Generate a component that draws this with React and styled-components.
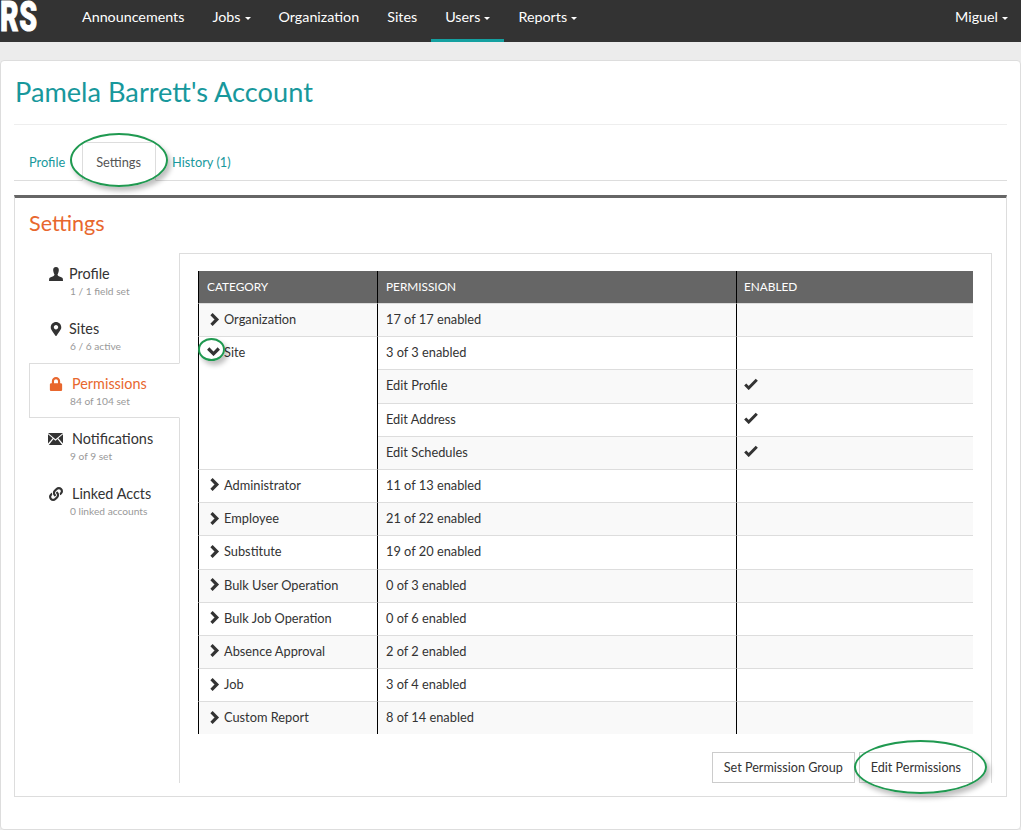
import React from 'react'
import styled, {createGlobalStyle} from 'styled-components'
import {FaLink, FaLock, FaMapMarkerAlt} from 'react-icons/fa'

const GlobalStyle = createGlobalStyle`
    html, body {
        margin: 0;
        background: #ececec;
        overflow: hidden;
    }
    body {
        font-family: Lato, "Open Sans", Arial, sans-serif;
        font-size: 12.8px;
        line-height: 20px;
        color: #333;
    }
`

const navItems = [
    {label: 'Announcements'},
    {label: 'Jobs', caret: true},
    {label: 'Organization'},
    {label: 'Sites'},
    {label: 'Users', caret: true, active: true},
    {label: 'Reports', caret: true},
]

const sideItems = [
    {label: 'Profile', sub: '1 / 1 field set', icon: <UserIcon/>},
    {label: 'Sites', sub: '6 / 6 active', icon: <FaMapMarkerAlt size={14}/>},
    {label: 'Permissions', sub: '84 of 104 set', icon: <FaLock size={14}/>, wide: true, active: true},
    {label: 'Notifications', sub: '9 of 9 set', icon: <MailIcon/>, wide: true},
    {label: 'Linked Accts', sub: '0 linked accounts', icon: <FaLink size={14}/>, wide: true},
]

const categories = [
    {name: 'Organization', count: '17 of 17 enabled'},
    {
        name: 'Site',
        count: '3 of 3 enabled',
        open: true,
        items: ['Edit Profile', 'Edit Address', 'Edit Schedules'],
    },
    {name: 'Administrator', count: '11 of 13 enabled'},
    {name: 'Employee', count: '21 of 22 enabled'},
    {name: 'Substitute', count: '19 of 20 enabled'},
    {name: 'Bulk User Operation', count: '0 of 3 enabled'},
    {name: 'Bulk Job Operation', count: '0 of 6 enabled'},
    {name: 'Absence Approval', count: '2 of 2 enabled'},
    {name: 'Job', count: '3 of 4 enabled'},
    {name: 'Custom Report', count: '8 of 14 enabled'},
]

function UserIcon() {
    return (
        <svg width="14" height="14" viewBox="0 0 14 14" fill="#333">
            <path d="M7 0C4.9 0 4 1.5 4.2 3.4 4.4 5.2 5 6.6 5.4 7.3 5.6 8 5.2 8.7 4.2 9.2 2.6 10 .6 10.400.2 11.400L0 14h14l-.2-2.600c-.4-1-2.400-1.400-4-2.200-1-.5-1.400-1.200-1.200-1.900.4-.7 1-2.100 1.200-3.900C10 1.500 9.100 0 7 0z"/>
        </svg>
    )
}

function MailIcon() {
    return (
        <svg width="15" height="12" viewBox="0 0 15 12" fill="#333">
            <path d="M0 0h15L7.500 6.200z"/>
            <path d="M0 1.300v9.200l4.700-5.300z"/>
            <path d="M15 1.300v9.200l-4.700-5.300z"/>
            <path d="M.8 12h13.400L9.500 6.100 7.500 7.800 5.500 6.100z"/>
        </svg>
    )
}

function ChevronRightIcon() {
    return (
        <svg width="11" height="13" viewBox="0 0 11 13" fill="none" stroke="#333" strokeWidth="3.200">
            <path d="M2.500 1.200 7.800 6.500 2.500 11.800"/>
        </svg>
    )
}

function ChevronDownIcon() {
    return (
        <ChevronDownSvg width="13" height="9" viewBox="0 0 13 9" fill="none" stroke="#333" strokeWidth="3.200">
            <path d="M1.200 1.500 6.500 6.800 11.800 1.500"/>
        </ChevronDownSvg>
    )
}

function CheckIcon() {
    return (
        <svg width="14" height="12" viewBox="0 0 14 12" fill="none" stroke="#333" strokeWidth="3">
            <path d="M1.200 6.500 4.700 10 12.800 1.800"/>
        </svg>
    )
}

export default function App() {
    return (
        <>
            <GlobalStyle/>
            <NavBar>
                <Logo>RS</Logo>
                <NavList>
                    {navItems.map(item =>
                        <NavItem key={item.label} $active={item.active}>
                            {item.label}
                            {item.caret && <Caret/>}
                        </NavItem>
                    )}
                </NavList>
                <UserMenu>Miguel<Caret/></UserMenu>
            </NavBar>
            <Page>
                <Title>Pamela Barrett's Account</Title>
                <Tabs>
                    <Tab>Profile</Tab>
                    <Tab $active>
                        Settings
                        <SettingsRing/>
                    </Tab>
                    <Tab>History (1)</Tab>
                </Tabs>
                <SettingsPanel>
                    <PanelTitle>Settings</PanelTitle>
                    <PanelBody>
                        <SideNav>
                            {sideItems.map(item =>
                                <SideItem key={item.label} $active={item.active}>
                                    <SideHead $active={item.active}>
                                        <SideIcon $active={item.active} $wide={item.wide}>{item.icon}</SideIcon>
                                        {item.label}
                                    </SideHead>
                                    <SideSub>{item.sub}</SideSub>
                                </SideItem>
                            )}
                        </SideNav>
                        <Content>
                            <PermissionTable>
                                <colgroup>
                                    <col width="180"/>
                                    <col width="359"/>
                                    <col width="236"/>
                                </colgroup>
                                <thead>
                                <tr>
                                    <HeadCell>Category</HeadCell>
                                    <HeadCell>Permission</HeadCell>
                                    <HeadCell>Enabled</HeadCell>
                                </tr>
                                </thead>
                                <tbody>
                                {categories.flatMap((category, index) => {
                                    const striped = index === 0 || (index > 2 && index % 2 === 1)
                                    const rows = [
                                        <tr key={category.name}>
                                            <CategoryCell rowSpan={category.items ? category.items.length + 1 : 1} $striped={striped}>
                                                <CategoryName>
                                                    <Chevron>
                                                        {category.open ? <ChevronDownIcon/> : <ChevronRightIcon/>}
                                                        {category.open && <ChevronRing/>}
                                                    </Chevron>
                                                    {category.name}
                                                </CategoryName>
                                            </CategoryCell>
                                            <Cell $striped={striped}>{category.count}</Cell>
                                            <EnabledCell $striped={striped}/>
                                        </tr>
                                    ]
                                    ;(category.items || []).forEach((name, i) => {
                                        rows.push(
                                            <tr key={name}>
                                                <Cell $striped={i % 2 === 0}>{name}</Cell>
                                                <EnabledCell $striped={i % 2 === 0}><CheckIcon/></EnabledCell>
                                            </tr>
                                        )
                                    })
                                    return rows
                                })}
                                </tbody>
                            </PermissionTable>
                            <Actions>
                                <ActionButton>Set Permission Group</ActionButton>
                                <ActionButton>
                                    Edit Permissions
                                    <EditRing/>
                                </ActionButton>
                            </Actions>
                        </Content>
                    </PanelBody>
                </SettingsPanel>
            </Page>
        </>
    )
}

const NavBar = styled.header`
    height: 42px;
    background: #333;
    display: flex;
    align-items: stretch;
    color: #fff;
    overflow: hidden;
`

const Logo = styled.div`
    width: 68px;
    flex: none;
    font-family: "Roboto", Arial, sans-serif;
    font-weight: 900;
    font-size: 42px;
    line-height: 34px;
    letter-spacing: 1px;
    color: #fff;
    transform: scaleX(0.68);
    transform-origin: 0 0;
    -webkit-text-stroke: 1px #fff;
`

const NavList = styled.nav`
    display: flex;
    flex: 1;
`

const NavItem = styled.div`
    padding: 7px 14px 0;
    font-size: 14.3px;
    color: #fff;
    box-sizing: border-box;
    height: 42px;
    border-bottom: 3px solid ${props => props.$active ? '#14a0a0' : 'transparent'};
`

const UserMenu = styled.div`
    padding: 7px 13px 0 0;
    font-size: 14.3px;
    color: #fff;
`

const Caret = styled.span`
    display: inline-block;
    margin-left: 4px;
    vertical-align: middle;
    border-top: 3px solid #fff;
    border-left: 3px solid transparent;
    border-right: 3px solid transparent;
`

const Page = styled.main`
    box-sizing: border-box;
    height: 770px;
    margin-top: 18px;
    padding: 0 13px 0 13px;
    background: #fff;
    border: 1px solid #ddd;
    border-radius: 4px;
`

const Title = styled.h1`
    margin: 0;
    height: 64px;
    padding: 14px 0 0 1px;
    box-sizing: border-box;
    font-size: 27.2px;
    line-height: 34px;
    font-weight: 400;
    color: #18989c;
    border-bottom: 1px solid #eee;
`

const Tabs = styled.div`
    display: flex;
    margin-top: 17px;
    padding-left: 1px;
    height: 38px;
    border-bottom: 1px solid #ddd;
`

const Tab = styled.div`
    position: relative;
    box-sizing: border-box;
    height: 39px;
    padding: 9px 14px 9px 13px;
    margin-right: 2px;
    color: ${props => props.$active ? '#555' : '#18989c'};
    background: ${props => props.$active ? '#fff' : 'transparent'};
    border: 1px solid ${props => props.$active ? '#ddd' : 'transparent'};
    border-bottom-color: ${props => props.$active ? '#fff' : 'transparent'};
`

const Ring = styled.span`
    position: absolute;
    box-sizing: border-box;
    border: 2px solid #1f9950;
    border-radius: 50%;
    box-shadow: 3px 4px 5px rgba(0, 0, 0, 0.25);
    pointer-events: none;
`

const SettingsRing = styled(Ring)`
    left: -13px;
    top: -10px;
    width: 98px;
    height: 54px;
`

const ChevronRing = styled(Ring)`
    left: -11px;
    top: -11px;
    width: 27px;
    height: 23px;
`

const EditRing = styled(Ring)`
    left: -6px;
    top: -13px;
    width: 133px;
    height: 54px;
`

const SettingsPanel = styled.section`
    box-sizing: border-box;
    height: 602px;
    margin-top: 14px;
    padding: 0 14px;
    border: 1px solid #ddd;
    border-top: 3px solid #666;
`

const PanelTitle = styled.h3`
    margin: 0;
    height: 55px;
    padding-top: 12px;
    box-sizing: border-box;
    font-size: 21.6px;
    line-height: 26px;
    font-weight: 400;
    color: #e8672e;
`

const PanelBody = styled.div`
    display: flex;
    height: 530px;
`

const SideNav = styled.aside`
    width: 150px;
    flex: none;
`

const SideItem = styled.div`
    position: relative;
    box-sizing: border-box;
    height: 55px;
    padding: 10px 0 0 18px;
    margin-right: ${props => props.$active ? '-1px' : '0'};
    z-index: ${props => props.$active ? 1 : 0};
    background: #fff;
    border: 1px solid ${props => props.$active ? '#ddd' : 'transparent'};
    border-right-color: ${props => props.$active ? '#fff' : 'transparent'};
`

const SideHead = styled.div`
    display: flex;
    align-items: center;
    font-size: 14.4px;
    color: ${props => props.$active ? '#e8672e' : '#333'};
`

const SideIcon = styled.span`
    display: flex;
    justify-content: center;
    width: 15px;
    margin-right: ${props => props.$wide ? '9px' : '6px'};
    color: ${props => props.$active ? '#e8672e' : '#333'};
`

const SideSub = styled.div`
    padding-left: 22px;
    font-size: 10.2px;
    line-height: 14px;
    color: #999;
`

const Content = styled.div`
    flex: 1;
    min-width: 0;
    box-sizing: border-box;
    padding: 17px 18px 0;
    border: 1px solid #ddd;
    border-bottom: 0;
`

const PermissionTable = styled.table`
    width: 775px;
    border-collapse: separate;
    border-spacing: 0;
    table-layout: fixed;
    font-size: 12.8px;
`

const HeadCell = styled.th`
    box-sizing: border-box;
    height: 32px;
    padding: 0 7px 0 8px;
    background: #666;
    color: #fff;
    font-size: 11.800px;
    font-weight: 400;
    text-align: left;
    text-transform: uppercase;
    border-right: 1px solid #000;
    &:first-child {
        border-left: 1px solid #000;
    }
    &:last-child {
        border-right: 0;
        padding-left: 7px;
    }
`

const Cell = styled.td`
    box-sizing: border-box;
    height: 33.2px;
    padding: 5px 8px 7px;
    vertical-align: top;
    background: ${props => props.$striped ? '#f9f9f9' : '#fff'};
    border-top: 1px solid #ddd;
    border-right: 1px solid #000;
`

const EnabledCell = styled(Cell)`
    padding-left: 7px;
    border-right: 0;
    vertical-align: middle;
`

const CategoryCell = styled(Cell)`
    border-left: 1px solid #000;
`

const CategoryName = styled.div`
    display: flex;
    align-items: center;
`

const Chevron = styled.span`
    position: relative;
    display: flex;
    justify-content: center;
    width: 11px;
    margin: 0 4px 0 2px;
`

const ChevronDownSvg = styled.svg`
    flex: none;
    margin: -2px 0 0 -2px;
`

const Actions = styled.div`
    display: flex;
    justify-content: flex-end;
    gap: 4px;
    width: 775px;
    margin-top: 18px;
    box-sizing: border-box;
`

const ActionButton = styled.button`
    position: relative;
    height: 31px;
    padding: 0 11px;
    font-family: inherit;
    font-size: 12.6px;
    color: #333;
    background: #fff;
    border: 1px solid #ccc;
`
